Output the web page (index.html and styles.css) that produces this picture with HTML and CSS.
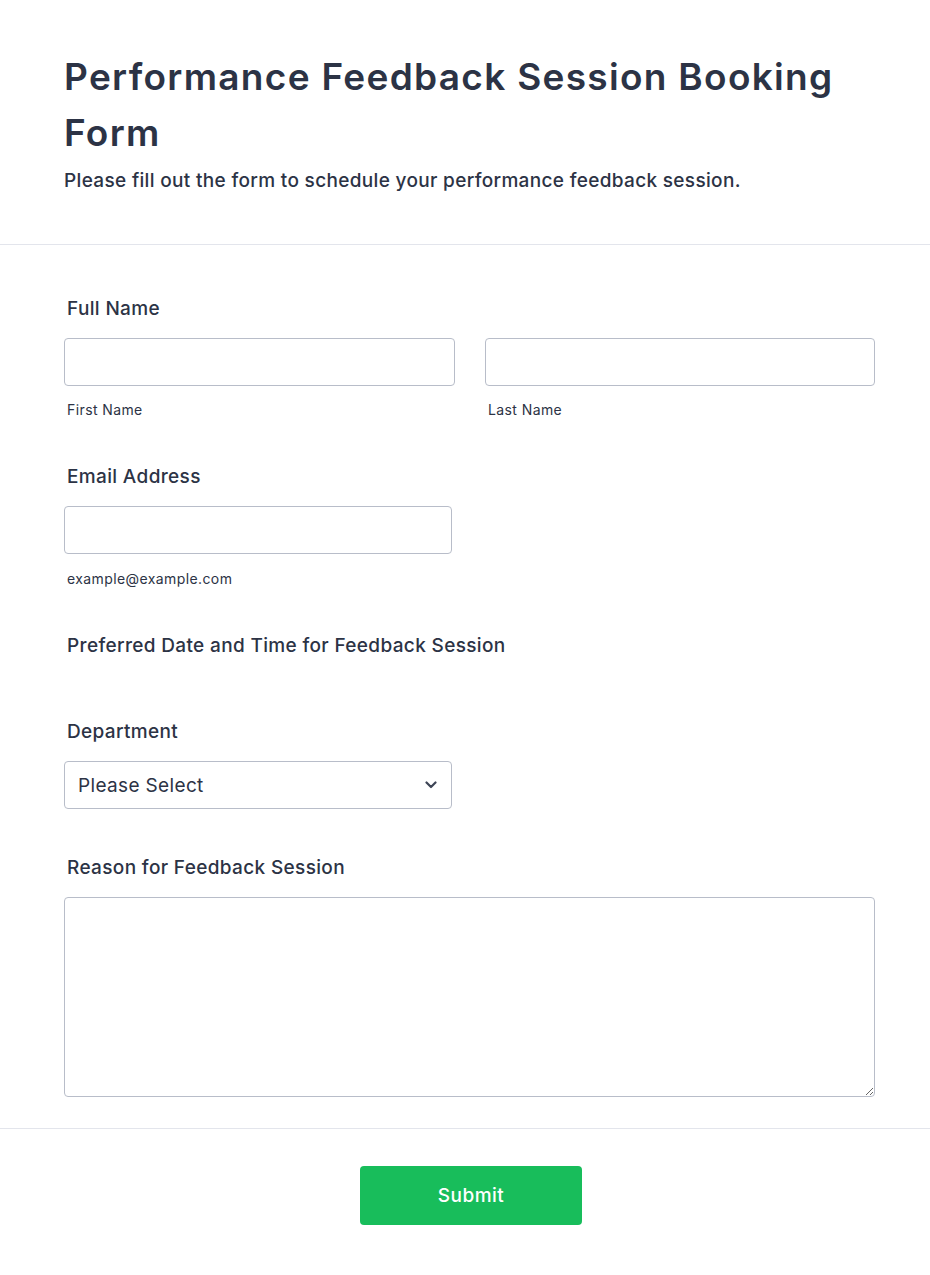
FILE: index.html
```html
<!DOCTYPE html>
<html lang="en">
<head>
<meta charset="utf-8">
<title>Performance Feedback Session Booking Form</title>
<link rel="stylesheet" href="styles.css">
</head>
<body>
<header class="header">
  <h1 class="title">Performance Feedback Session Booking Form</h1>
  <p class="subtitle">Please fill out the form to schedule your performance feedback session.</p>
</header>
<main class="form">
  <div class="field field-first">
    <label class="label">Full Name</label>
    <div class="name-row">
      <div class="name-col">
        <input class="input" type="text">
        <div class="sublabel sublabel-name">First Name</div>
      </div>
      <div class="name-col">
        <input class="input" type="text">
        <div class="sublabel sublabel-name">Last Name</div>
      </div>
    </div>
  </div>
  <div class="field">
    <label class="label">Email Address</label>
    <input class="input input-half" type="email">
    <div class="sublabel">example@example.com</div>
  </div>
  <div class="field field-empty">
    <label class="label">Preferred Date and Time for Feedback Session</label>
  </div>
  <div class="field field-select">
    <label class="label">Department</label>
    <div class="select">
      <span class="select-text">Please Select</span>
      <svg class="chevron" width="12" height="8" viewBox="0 0 12 8"><path d="M1.5 1.5 L6 6 L10.5 1.5" fill="none" stroke="#3e4556" stroke-width="2.2" stroke-linecap="round" stroke-linejoin="round"/></svg>
    </div>
  </div>
  <div class="field field-last">
    <label class="label">Reason for Feedback Session</label>
    <textarea class="textarea"></textarea>
  </div>
</main>
<footer class="footer">
  <button class="submit" type="button">Submit</button>
</footer>
</body>
</html>
```
FILE: styles.css
```css
* { box-sizing: border-box; }
html, body {
  margin: 0;
  padding: 0;
  background: #ffffff;
  font-family: Inter, "Noto Sans", "Liberation Sans", sans-serif;
  color: #2c3345;
}
.header {
  padding: 49px 55px 51px 64px;
  border-bottom: 1px solid #e3e5ec;
}
.title {
  margin: 0;
  font-size: 37px;
  line-height: 56px;
  font-weight: 600;
  letter-spacing: 1.3px;
}
.subtitle {
  margin: 8px 0 0;
  font-size: 19px;
  line-height: 24px;
  font-weight: 500;
  letter-spacing: 0.33px;
}
.form {
  padding: 51px 55px 31px 64px;
  border-bottom: 1px solid #e3e5ec;
}
.field {
  display: flex;
  flex-direction: column;
  margin-bottom: 45px;
}
.field-select { margin-bottom: 46px; }
.field-empty { margin-bottom: 61px; }
.field-last { margin-bottom: 0; }
.label {
  margin: 0 0 17px 3px;
  padding-top: 1px;
  font-size: 19px;
  line-height: 24px;
  font-weight: 500;
  letter-spacing: 0.35px;
}
.field-empty .label { margin-bottom: 0; }
.name-row {
  display: grid;
  grid-template-columns: 391px 390px;
  column-gap: 30px;
}
.name-col { display: flex; flex-direction: column; }
.input {
  display: block;
  width: 100%;
  height: 48px;
  border: 1px solid #b8bdc9;
  border-radius: 4px;
  background: #fff;
  font: inherit;
  margin: 0;
}
.input-half { width: 388px; }
.sublabel {
  margin: 16px 0 0 3px;
  font-size: 14px;
  line-height: 18px;
  font-weight: 400;
  letter-spacing: 0.4px;
}
.sublabel-name { margin-top: 15px; }
.select {
  width: 388px;
  height: 48px;
  border: 1px solid #b8bdc9;
  border-radius: 4px;
  display: flex;
  align-items: center;
  justify-content: space-between;
  padding: 0 14px 0 13px;
}
.select-text {
  font-size: 19px;
  line-height: 24px;
  letter-spacing: 0.35px;
  padding-top: 1px;
}
.chevron { display: block; }
.textarea {
  display: block;
  width: 100%;
  height: 200px;
  border: 1px solid #b8bdc9;
  border-radius: 4px;
  font: inherit;
  margin: 0;
  resize: vertical;
}
.footer {
  padding: 37px 55px 40px 64px;
  display: flex;
  justify-content: center;
}
.submit {
  width: 222px;
  height: 59px;
  margin-left: 3px;
  border: 0;
  border-radius: 4px;
  background: #18bd5b;
  color: #fff;
  font-family: inherit;
  font-size: 19px;
  font-weight: 500;
  letter-spacing: 0.5px;
  cursor: pointer;
}
```
